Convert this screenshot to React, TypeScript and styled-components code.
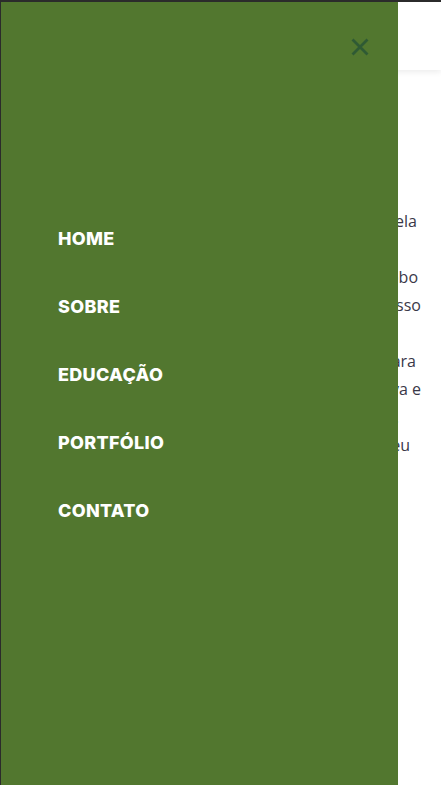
import styled, { createGlobalStyle } from 'styled-components'

const GlobalStyle = createGlobalStyle`
    html, body {
        margin: 0;
        padding: 0;
        background: #ffffff;
    }
    * {
        box-sizing: border-box;
    }
`

interface LineProps {
    $inset: number;
}

const links = ['HOME', 'SOBRE', 'EDUCAÇÃO', 'PORTFÓLIO', 'CONTATO']

// only the ends of each line peek out from behind the open menu
const paragraphs: { text: string; inset: number }[][] = [
    [
        { text: 'apaixonada pela', inset: 24 },
    ],
    [
        { text: 'um hobbo', inset: 23 },
        { text: 'sucesso', inset: 20 },
    ],
    [
        { text: 'para', inset: 25 },
        { text: 'criativa e', inset: 20 },
        { text: 'usam.', inset: 42 },
        { text: 'eu', inset: 31 },
    ],
]

const App = () => (
    <>
        <GlobalStyle />
        <Frame>
            <Header />
            <Main>
                {paragraphs.map((lines, i) => (
                    <Paragraph key={i}>
                        {lines.map((line) => (
                            <Line key={line.text} $inset={line.inset}>{line.text}</Line>
                        ))}
                    </Paragraph>
                ))}
            </Main>
            <Drawer>
                <CloseButton aria-label="Fechar menu">
                    <svg width="20" height="20" viewBox="0 0 20 20" fill="none">
                        <path d="M2.5 2.5 17.5 17.5M17.5 2.5 2.5 17.5" stroke="currentColor" strokeWidth="2.8" />
                    </svg>
                </CloseButton>
                <Nav>
                    {links.map((link) => (
                        <NavLink key={link} href="#">{link}</NavLink>
                    ))}
                </Nav>
            </Drawer>
        </Frame>
    </>
)

export default App

const Frame = styled.div`
    position: relative;
    width: 441px;
    height: 785px;
    overflow: hidden;
    background: #ffffff;
    border-top: 2px solid #2b2b2b;
    border-left: 1px solid #2b2b2b;
`

const Header = styled.header`
    height: 68px;
    background: #ffffff;
    box-shadow: 0 2px 6px rgba(0, 0, 0, 0.08);
`

const Main = styled.main`
    padding-top: 137px;
    font-family: 'Open Sans', 'Liberation Sans', sans-serif;
    font-size: 16px;
    line-height: 28px;
    color: #3a3848;
`

const Paragraph = styled.div`
    margin-bottom: 28px;
`

const Line = styled.div<LineProps>`
    white-space: nowrap;
    text-align: right;
    padding-right: ${({ $inset }) => $inset}px;
`

const Drawer = styled.aside`
    position: absolute;
    top: 0;
    left: 0;
    bottom: 0;
    width: 397px;
    background: #52772f;
`

const CloseButton = styled.button`
    position: absolute;
    top: 35px;
    right: 28px;
    width: 20px;
    height: 20px;
    padding: 0;
    border: none;
    background: none;
    color: #2f5a34;
    cursor: pointer;
    display: flex;
`

const Nav = styled.nav`
    display: flex;
    flex-direction: column;
    gap: 40px;
    padding: 223px 0 0 57px;
`

const NavLink = styled.a`
    font-family: Inter, 'Noto Sans', sans-serif;
    font-weight: 800;
    font-size: 18px;
    line-height: 28px;
    letter-spacing: 0.3px;
    color: #ffffff;
    text-decoration: none;
`
